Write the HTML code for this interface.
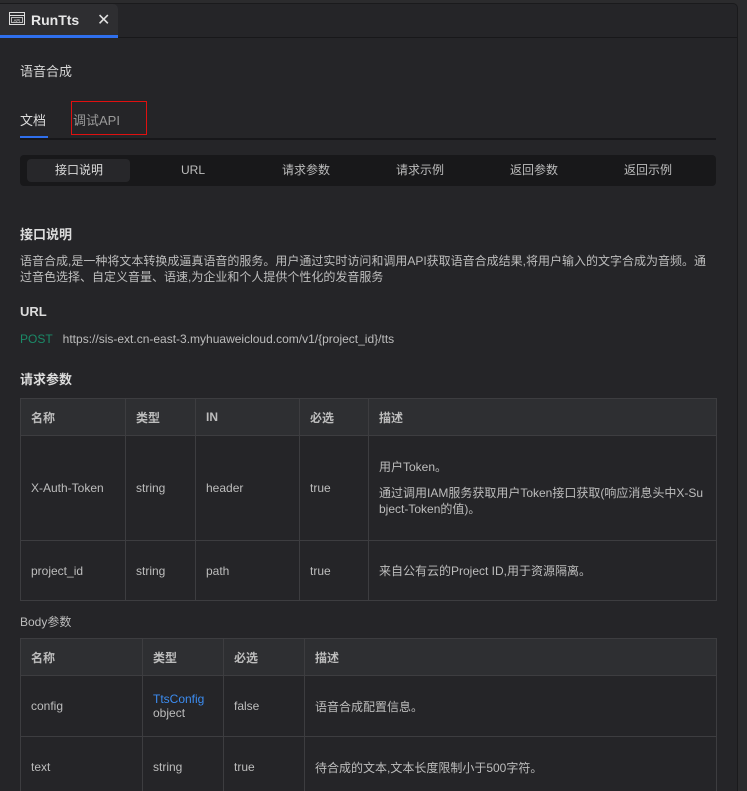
<!DOCTYPE html>
<html style="width:747px;height:791px;overflow:hidden"><head><meta charset="utf-8">
<style>
*{margin:0;padding:0;box-sizing:border-box}
body{width:747px;height:791px;overflow:hidden;background:#2b2b2d;font-family:"Liberation Sans","Noto Sans CJK SC",sans-serif;color:#c8c8c8;position:relative}
.panel{position:absolute;left:0;top:3px;width:738px;height:788px;background:#252528;border:1px solid #1a1a1c;border-radius:0 5px 0 0;border-left:none;border-bottom:none}
.tabbar{position:absolute;left:0;top:0;width:737px;height:34px;border-bottom:1px solid #18181a}
.tab{position:absolute;left:0;top:0;width:118px;height:34px;background:#2e2e31;border-radius:0 5px 0 0}
.tab .bar{position:absolute;left:0;bottom:0;width:118px;height:3px;background:#2f6fed}
.abs{position:absolute;white-space:nowrap}
.h{font-weight:bold;font-size:13px;color:#dcdcdc}
.t{font-size:12px;color:#bdbdbd}
table{position:absolute;border-collapse:collapse;font-size:12px;color:#bdbdbd}
td,th{border:1px solid #3d3d40;padding:0 0 0 10px;text-align:left;vertical-align:middle}
th{background:#2e2f32;font-weight:bold;color:#bdbdbd}
.seg{position:absolute;left:20px;top:155px;width:696px;height:31px;background:#18181a;border-radius:4px}
.seg span{position:absolute;top:0;line-height:31px;font-size:12px;color:#bdbdbd;transform:translateX(-50%)}
</style></head><body>
<div class="panel">
 <div class="tabbar">
  <div class="tab">
   <svg class="abs" style="left:9px;top:8px" width="16" height="13" viewBox="0 0 16 13"><rect x="0.5" y="0.5" width="15" height="12" fill="none" stroke="#ddd"/><line x1="0" y1="3.5" x2="16" y2="3.5" stroke="#ddd"/><rect x="2.5" y="5.5" width="11" height="5" fill="none" stroke="#ddd" stroke-width=".8"/><text x="8" y="9.8" font-size="4.2" fill="#ddd" text-anchor="middle" font-family="Liberation Sans">API</text></svg>
   <div class="abs" style="left:31px;top:8px;font-size:14px;font-weight:bold;color:#e6e6e6">RunTts</div>
   <div class="abs" style="left:97px;top:6px;font-size:16px;color:#e0e0e0">✕</div>
   <div class="bar"></div>
  </div>
 </div>
</div>
<div class="abs" style="left:20px;top:61px;font-size:13px;color:#d6d6d6">语音合成</div>
<div class="abs" style="left:20px;top:110px;font-size:13px;color:#dcdcdc">文档</div>
<div class="abs" style="left:73px;top:110px;font-size:13px;color:#9a9a9a">调试API</div>
<div class="abs" style="left:71px;top:101px;width:76px;height:34px;border:1px solid #e01010"></div>
<div class="abs" style="left:20px;top:138px;width:696px;height:2px;background:#17171a"></div>
<div class="abs" style="left:20px;top:136px;width:28px;height:2px;background:#2f6fed"></div>
<div class="seg">
 <div class="abs" style="left:7px;top:4px;width:103px;height:23px;background:#27272a;border-radius:4px"></div>
 <span style="left:59px;color:#dcdcdc">接口说明</span><span style="left:173px">URL</span><span style="left:286px">请求参数</span><span style="left:400px">请求示例</span><span style="left:514px">返回参数</span><span style="left:628px">返回示例</span>
</div>
<div class="abs h" style="left:20px;top:224px">接口说明</div>
<div class="abs t" style="left:20px;top:253px;line-height:16px;white-space:normal;width:690px">语音合成,是一种将文本转换成逼真语音的服务。用户通过实时访问和调用API获取语音合成结果,将用户输入的文字合成为音频。通过音色选择、自定义音量、语速,为企业和个人提供个性化的发音服务</div>
<div class="abs h" style="left:20px;top:304px">URL</div>
<div class="abs t" style="left:20px;top:332px"><span style="color:#1b8a68">POST</span>&nbsp;&nbsp;&nbsp;https://sis-ext.cn-east-3.myhuaweicloud.com/v1/{project_id}/tts</div>
<div class="abs h" style="left:20px;top:369px">请求参数</div>
<table style="left:20px;top:398px;width:697px">
 <tr style="height:37px"><th style="width:105px">名称</th><th style="width:70px">类型</th><th style="width:104px">IN</th><th style="width:69px">必选</th><th>描述</th></tr>
 <tr style="height:105px"><td>X-Auth-Token</td><td>string</td><td>header</td><td>true</td><td style="line-height:16px;padding-right:8px;word-break:break-all">用户Token。<div style="height:10px"></div>通过调用IAM服务获取用户Token接口获取(响应消息头中X-Subject-Token的值)。</td></tr>
 <tr style="height:60px"><td>project_id</td><td>string</td><td>path</td><td>true</td><td>来自公有云的Project ID,用于资源隔离。</td></tr>
</table>
<div class="abs t" style="left:20px;top:613px">Body参数</div>
<table style="left:20px;top:638px;width:697px">
 <tr style="height:37px"><th style="width:122px">名称</th><th style="width:81px">类型</th><th style="width:81px">必选</th><th>描述</th></tr>
 <tr style="height:61px"><td>config</td><td style="line-height:14px"><span style="color:#3c8cf0">TtsConfig</span><br>object</td><td>false</td><td>语音合成配置信息。</td></tr>
 <tr style="height:61px"><td>text</td><td>string</td><td>true</td><td>待合成的文本,文本长度限制小于500字符。</td></tr>
</table>
</body></html>
